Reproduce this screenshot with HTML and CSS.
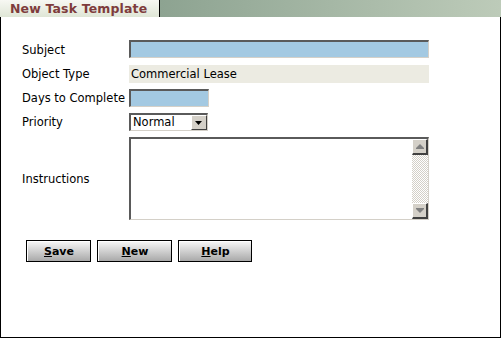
FILE: index.html
```html
<!DOCTYPE html>
<html>
<head>
<meta charset="utf-8">
<link rel="stylesheet" href="styles.css">
</head>
<body>
<div class="frame">
  <div class="header">
    <div class="tab">New Task Template</div>
    <div class="bar"></div>
  </div>
  <div class="body">
    <div class="form">
      <div class="label label-first">Subject</div>
      <div class="field field-first"><div class="input input-wide"></div></div>

      <div class="label">Object Type</div>
      <div class="field"><div class="readonly">Commercial Lease</div></div>

      <div class="label">Days to Complete</div>
      <div class="field"><div class="input input-short"></div></div>

      <div class="label">Priority</div>
      <div class="field">
        <div class="select">
          <span class="select-text">Normal</span>
          <span class="select-btn"><svg width="8" height="4" viewBox="0 0 8 4"><path d="M0 0H7L3.5 4Z" fill="#000"/></svg></span>
        </div>
      </div>

      <div class="label label-mid">Instructions</div>
      <div class="field">
        <div class="textarea">
          <div class="scroll">
            <span class="sbtn"><svg width="8" height="5" viewBox="0 0 8 5"><path d="M4 0L8 4H0Z" fill="#808080"/><rect x="0" y="4" width="8" height="1" fill="#808080"/></svg></span>
            <span class="track"></span>
            <span class="sbtn"><svg width="8" height="5" viewBox="0 0 8 5"><rect x="0" y="0" width="8" height="1" fill="#808080"/><path d="M0 1H8L4 5Z" fill="#808080"/></svg></span>
          </div>
        </div>
      </div>
    </div>
    <div class="buttons">
      <div class="btn btn-save"><span><u>S</u>ave</span></div>
      <div class="btn btn-new"><span><u>N</u>ew</span></div>
      <div class="btn btn-help"><span><u>H</u>elp</span></div>
    </div>
  </div>
</div>
</body>
</html>
```

FILE: styles.css
```css
html, body {
  margin: 0;
  padding: 0;
  background: #fff;
}
.frame {
  width: 501px;
  height: 338px;
  display: flex;
  flex-direction: column;
  font-family: "DejaVu Sans", Verdana, sans-serif;
  font-size: 11.5px;
  color: #000;
}
.header {
  height: 17px;
  display: flex;
  flex: none;
}
.tab {
  width: 160px;
  height: 17px;
  box-sizing: border-box;
  border-right: 1px solid #000;
  background: linear-gradient(to bottom, #f7f8f3, #dfe6d6);
  color: #7e3c3c;
  font-size: 12.5px;
  font-weight: bold;
  line-height: 17px;
  padding-left: 10px;
  letter-spacing: 0.15px;
}
.bar {
  flex: 1;
  background: linear-gradient(to right, #8da391, #bdcbb9);
}
.body {
  flex: 1;
  border: 1px solid #000;
  border-top: none;
  padding: 23px 0 0 21px;
}
.form {
  display: grid;
  grid-template-columns: 107px auto;
  row-gap: 6px;
  align-items: center;
}
.label {
  height: 18px;
  line-height: 18px;
  white-space: nowrap;
}
.field {
  display: flex;
}
.field-first {
  height: 19px;
  align-items: flex-start;
}
.input {
  height: 18px;
  box-sizing: border-box;
  background: #a3c9e2;
  border-style: solid;
  border-width: 2px 1px 1px 2px;
  border-color: #5a5a5a #d4d0c8 #d4d0c8 #5a5a5a;
}
.input-wide { width: 300px; }
.input-short { width: 80px; }
.readonly {
  width: 300px;
  height: 18px;
  line-height: 18px;
  background: #ecebe2;
  padding-left: 2px;
  box-sizing: border-box;
}
.select {
  width: 79px;
  height: 18px;
  box-sizing: border-box;
  border-style: solid;
  border-width: 2px 1px 1px 2px;
  border-color: #5a5a5a #d4d0c8 #d4d0c8 #5a5a5a;
  display: flex;
  align-items: center;
  justify-content: space-between;
  background: #fff;
}
.select-text {
  padding-left: 2px;
  line-height: 15px;
}
.select-btn {
  width: 16px;
  height: 15px;
  box-sizing: border-box;
  background: #d4d0c8;
  border-style: solid;
  border-width: 1px;
  border-color: #fff #404040 #404040 #fff;
  display: flex;
  align-items: center;
  justify-content: center;
}
.label-mid {
  align-self: center;
}
.textarea {
  width: 300px;
  height: 83px;
  box-sizing: border-box;
  border-style: solid;
  border-width: 2px 1px 1px 2px;
  border-color: #5a5a5a #d4d0c8 #d4d0c8 #5a5a5a;
  background: #fff;
  display: flex;
  justify-content: flex-end;
}
.scroll {
  width: 16px;
  display: flex;
  flex-direction: column;
}
.sbtn {
  width: 16px;
  height: 16px;
  box-sizing: border-box;
  background: #d4d0c8;
  border-style: solid;
  border-width: 1px 2px 2px 1px;
  border-color: #fff #404040 #404040 #fff;
  display: flex;
  align-items: center;
  justify-content: center;
  flex: none;
}
.track {
  flex: 1;
  background-color: #fff;
  background-image: repeating-conic-gradient(#d4d0c8 0 25%, #fff 0 50%);
  background-size: 2px 2px;
}
.buttons {
  display: flex;
  gap: 6px;
  margin-top: 20px;
  margin-left: 4px;
}
.btn {
  height: 22px;
  box-sizing: border-box;
  border: 1px solid #000;
  display: flex;
}
.btn span {
  flex: 1;
  border-top: 1px solid #fff;
  border-left: 1px solid #fff;
  background: linear-gradient(to bottom, #f4f4f4, #a9a9a9);
  display: flex;
  align-items: center;
  justify-content: center;
  font-weight: bold;
  font-size: 11px;
  color: #000;
}
.btn-save { width: 65px; }
.btn-new { width: 75px; }
.btn-help { width: 74px; }
```
